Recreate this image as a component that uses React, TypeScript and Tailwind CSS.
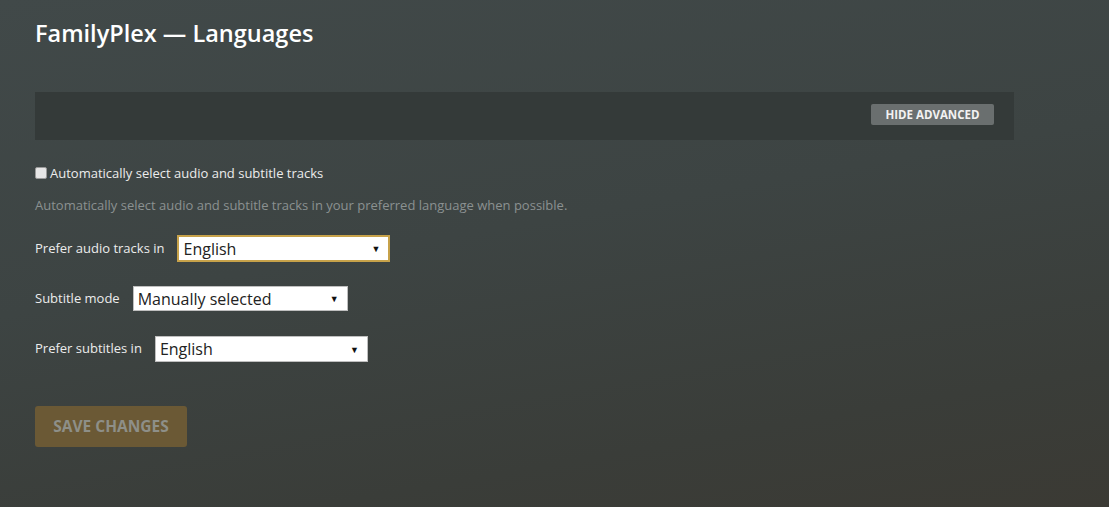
import React from "react";

function FakeSelect({ value, width, height, focused }: { value: string; width: string; height: string; focused?: boolean }) {
  return (
    <div
      className={`flex items-center justify-between bg-white pl-[4px] pr-[8px] text-[16px] text-[#222] ${width} ${height} ${
        focused ? "border-2 border-[#c7a24a]" : "border border-[#bfbfbf]"
      }`}
    >
      <span className="leading-none">{value}</span>
      <span className="text-[9px] leading-none text-[#111]">▼</span>
    </div>
  );
}

export default function App() {
  return (
    <div
      className="relative h-[507px] w-[1109px] overflow-hidden bg-[linear-gradient(170deg,#414949_0%,#3d4443_45%,#3a3d39_80%,#3b3a34_100%)] text-white"
      style={{ fontFamily: '"Open Sans", sans-serif' }}
    >
      <div className="pl-[35px] pt-[17px]">
        <h1 className="text-[23.5px] font-semibold leading-[32px] text-white">FamilyPlex — Languages</h1>

        <div className="mt-[43px] flex h-[48px] w-[979px] items-start justify-end bg-[#343a39] pr-[20px] pt-[12px]">
          <button className="flex h-[21px] w-[123px] items-center justify-center rounded-[2px] bg-[#6a6f6f] text-[11.5px] font-bold text-[#f2f2f2]">
            HIDE ADVANCED
          </button>
        </div>

        <label className="mt-[24px] flex items-center gap-[3px] text-[13px] text-[#ececec]">
          <span className="block h-[12px] w-[12px] rounded-[2px] border border-[#9a9a9a] bg-[#e6e6e6]" />
          <span className="leading-[18px]">Automatically select audio and subtitle tracks</span>
        </label>

        <p className="mt-[14px] text-[13px] leading-[18px] text-[#8b9191]">
          Automatically select audio and subtitle tracks in your preferred language when possible.
        </p>

        <div className="mt-[21px] flex items-center gap-[13px]">
          <span className="text-[13px] text-[#ececec]">Prefer audio tracks in</span>
          <FakeSelect value="English" width="w-[213px]" height="h-[27px]" focused />
        </div>

        <div className="mt-[24px] flex items-center gap-[13px]">
          <span className="text-[13px] text-[#ececec]">Subtitle mode</span>
          <FakeSelect value="Manually selected" width="w-[215px]" height="h-[25px]" />
        </div>

        <div className="mt-[25px] flex items-center gap-[13px]">
          <span className="text-[13px] text-[#ececec]">Prefer subtitles in</span>
          <FakeSelect value="English" width="w-[213px]" height="h-[26px]" />
        </div>

        <button className="mt-[44px] h-[41px] w-[152px] rounded-[3px] bg-[#6b5935] text-[15.5px] font-bold text-[#8e8f88]">
          SAVE CHANGES
        </button>
      </div>
    </div>
  );
}
